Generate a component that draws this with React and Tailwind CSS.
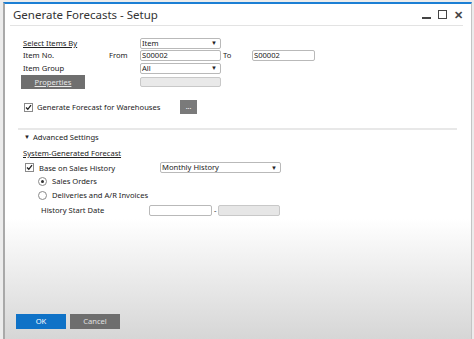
import React from "react";

const inputCls = "h-[11px] border border-[#b9b9b9] rounded-[2px] bg-white text-[7.6px] leading-[9px] pl-[1px] flex items-center";

function Dropdown({ value, width, blue }) {
  return (
    <div
      className={`${inputCls} ${width} justify-between pr-[3px] ${blue ? "bg-[#e6eefa]" : ""}`}
    >
      <span>{value}</span>
      <span className="text-[6px] leading-none">▼</span>
    </div>
  );
}

function CheckBox() {
  return (
    <div className="w-[9px] h-[9px] border border-[#8a8a8a] bg-white flex items-center justify-center">
      <svg width="7" height="7" viewBox="0 0 7 7">
        <path d="M1 3.5 L2.8 5.3 L6 1.2" stroke="#222" strokeWidth="1.3" fill="none" />
      </svg>
    </div>
  );
}

function Radio({ on }) {
  return (
    <div className="w-[9px] h-[9px] rounded-full border border-[#8a8a8a] bg-white flex items-center justify-center">
      {on && <div className="w-[3px] h-[3px] rounded-full bg-[#333]" />}
    </div>
  );
}

export default function App() {
  return (
    <div
      className="w-[474px] h-[339px] overflow-hidden bg-[#ececec] pt-[2px] pl-[3px] pr-[2px] text-[#222]"
      style={{ fontFamily: '"Noto Sans", "Open Sans", sans-serif' }}
    >
      <div className="h-[337px] border-t-2 border-t-[#1c7fd4] border-l-2 border-l-[#a9a9a9] border-r border-r-[#c4c4c4] bg-[linear-gradient(to_bottom,#ffffff_0%,#ffffff_64%,#d6d6d6_100%)] flex flex-col">
        {/* title bar */}
        <div className="h-[21px] flex items-center justify-between pl-[8px] pr-[8px]">
          <span className="text-[11.5px] text-[#333]">Generate Forecasts - Setup</span>
          <div className="flex items-center gap-[7px] text-[#444]">
            <div className="w-[9px] h-[1.5px] bg-[#444] mt-[7px]" />
            <div className="w-[9px] h-[9px] border border-[#444]" />
            <span className="text-[11px] font-bold leading-none">✕</span>
          </div>
        </div>
        <div className="h-px bg-[#e3e3e3] ml-[5px] mr-[8px]" />

        {/* content */}
        <div className="pl-[18px] text-[7.6px] leading-[12px] flex flex-col">
          <div className="flex items-center h-[12px] mt-[11px]">
            <span className="w-[117px] underline">Select Items By</span>
            <Dropdown value="Item" width="w-[81px]" />
          </div>
          <div className="flex items-center h-[12px]">
            <span className="w-[86px]">Item No.</span>
            <span className="w-[31px]">From</span>
            <div className={`${inputCls} w-[81px]`}>S00002</div>
            <span className="ml-[2px] w-[29px]">To</span>
            <div className={`${inputCls} w-[63px]`}>S00002</div>
          </div>
          <div className="flex items-center h-[12px] mt-[1px]">
            <span className="w-[117px]">Item Group</span>
            <Dropdown value="All" width="w-[81px]" />
          </div>
          <div className="flex items-center h-[14px] mt-[1px]">
            <div className="w-[64px] h-[14px] ml-[-2px] bg-[#6f6f6f] text-[#e8e8e8] flex items-center justify-center underline">
              Properties
            </div>
            <div className="ml-[55px] h-[10px] w-[81px] border border-[#c8c8c8] bg-[#e9e9e9] rounded-[2px]" />
          </div>
          <div className="flex items-center h-[14px] mt-[11px]">
            <div className="ml-[1px]"><CheckBox /></div>
            <span className="ml-[4px] w-[143px]">Generate Forecast for Warehouses</span>
            <div className="w-[17px] h-[14px] bg-[#7a7a7a] text-white flex items-center justify-center text-[7px]">...</div>
          </div>
          <div className="h-[2px] bg-[#e8e8e8] mt-[14px] mr-[14px] ml-[-5px]" />
          <div className="flex items-center h-[12px] mt-[1px] ml-[1px]">
            <span className="text-[6px] mr-[3px]">▼</span>
            <span>Advanced Settings</span>
          </div>
          <div className="h-[12px] mt-[4px] underline">System-Generated Forecast</div>
          <div className="flex items-center h-[13px] mt-[2px]">
            <div className="ml-[2px]"><CheckBox /></div>
            <span className="ml-[5px] w-[121px]">Base on Sales History</span>
            <Dropdown value="Monthly History" width="w-[121px]" blue />
          </div>
          <div className="flex items-center h-[14px] ml-[15px]">
            <Radio on />
            <span className="ml-[5px]">Sales Orders</span>
          </div>
          <div className="flex items-center h-[14px] ml-[15px]">
            <Radio />
            <span className="ml-[5px]">Deliveries and A/R Invoices</span>
          </div>
          <div className="flex items-center h-[14px] ml-[18px] mt-[1px]">
            <span className="w-[108px]">History Start Date</span>
            <div className={`${inputCls} w-[63px]`} />
            <span className="mx-[2px]">-</span>
            <div className="h-[11px] w-[62px] border border-[#c8c8c8] bg-[#e6e6e6] rounded-[2px]" />
          </div>
        </div>

        <div className="flex-1" />
        <div className="flex gap-[4px] pl-[11px] pb-[10px] text-[7.6px]">
          <div className="w-[50px] h-[15px] bg-[#0f72c7] text-white flex items-center justify-center">OK</div>
          <div className="w-[50px] h-[15px] bg-[#6e6e6e] text-[#e0e0e0] flex items-center justify-center">Cancel</div>
        </div>
      </div>
    </div>
  );
}
